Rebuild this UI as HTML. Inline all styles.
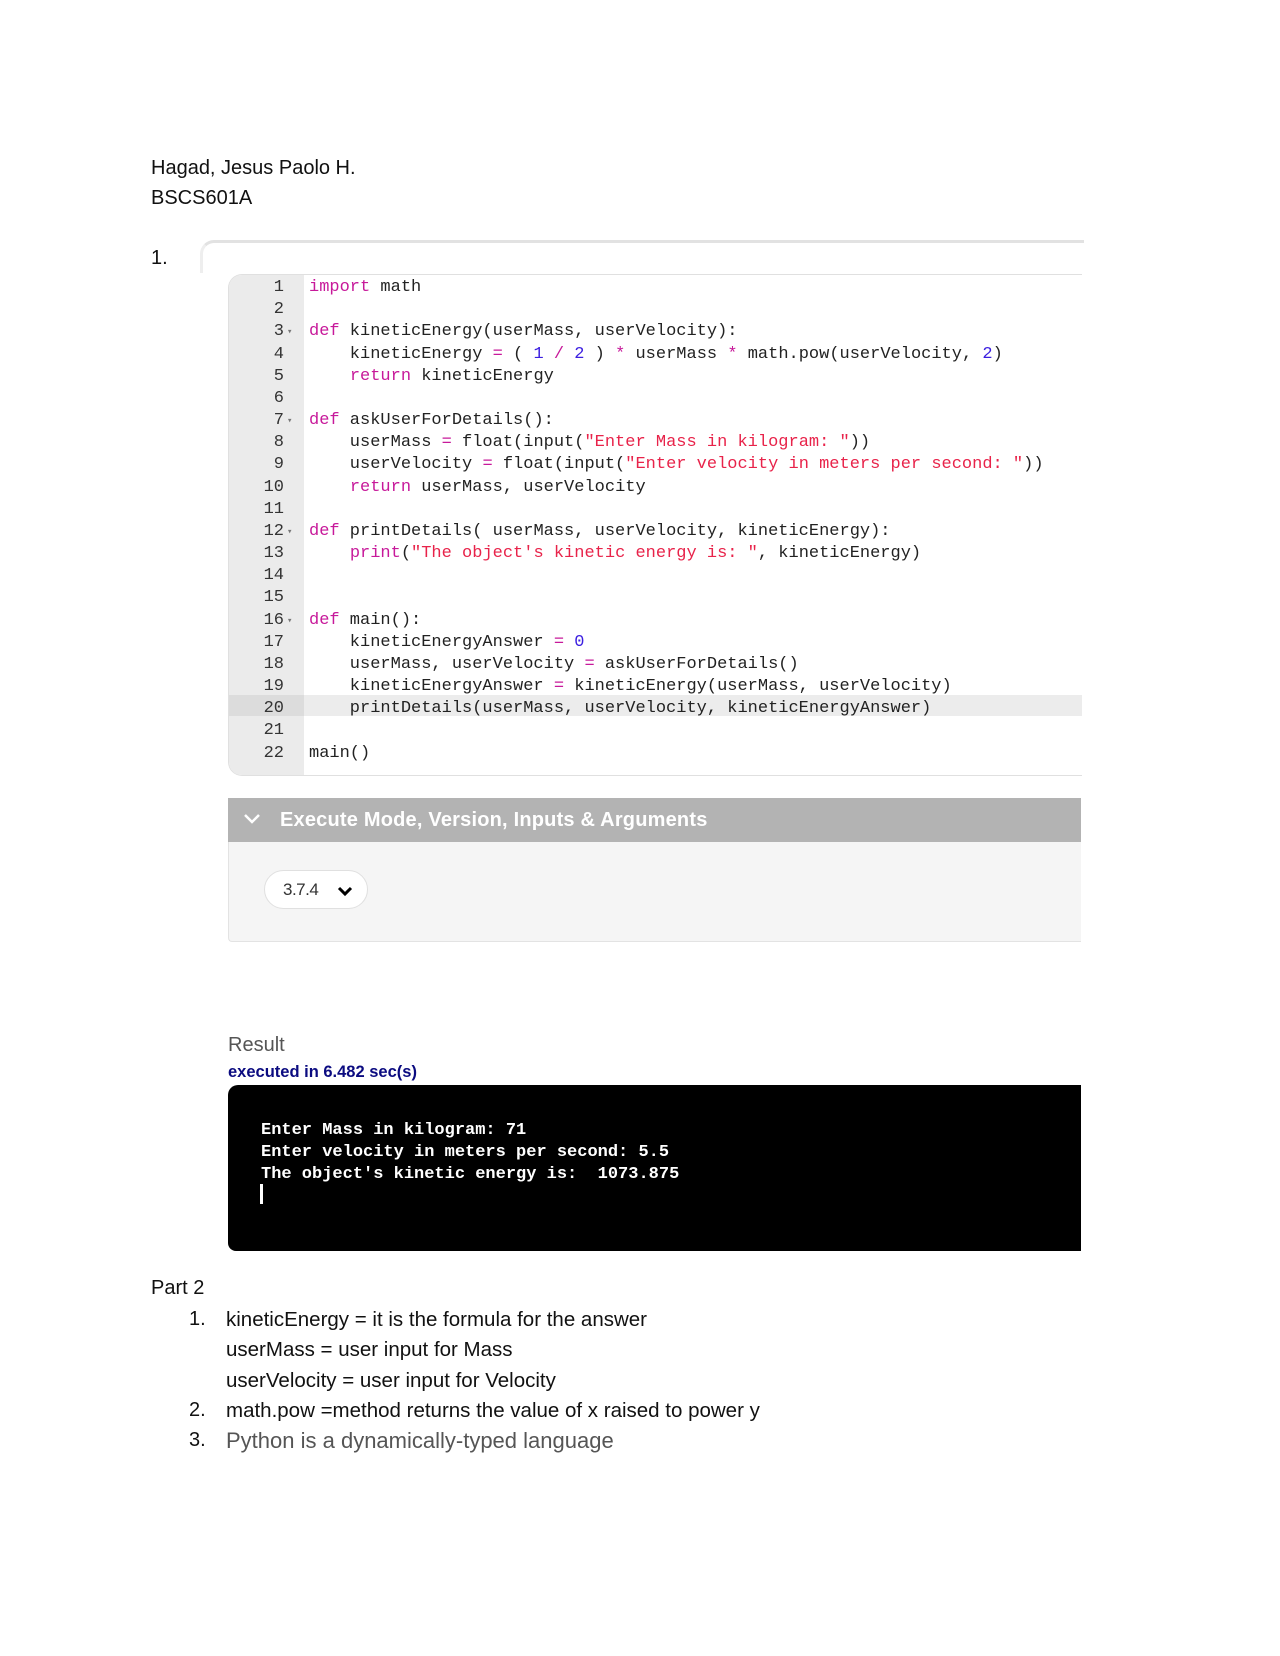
<!DOCTYPE html>
<html><head><meta charset="utf-8"><style>
body{margin:0;background:#fff;width:1280px;height:1656px;position:relative;overflow:hidden;font-family:"Liberation Sans",sans-serif;}
.a{position:absolute;white-space:pre;}
.doc{font-size:20px;color:#111;}
.code{position:absolute;left:228px;top:274px;width:853px;height:500px;border:1px solid #e0e0e0;border-right:none;border-radius:14px 0 0 14px;overflow:hidden;background:#fff;}
.gut{position:absolute;left:0;top:0;width:75px;height:100%;background:#ebebeb;}
.ln{position:absolute;white-space:pre;font-family:"Liberation Mono",monospace;font-size:17px;color:#333;line-height:22.17px;}
.k{color:#c7199a}.s{color:#e8234a}.n{color:#3b1ee0}.o{color:#c7199a}
.term{font-family:"Liberation Mono",monospace;font-weight:bold;font-size:17px;color:#fff;line-height:22px;}
</style></head><body>
<div class="a doc" style="left:151px;top:157px">Hagad, Jesus Paolo H.</div>
<div class="a doc" style="left:151px;top:187px">BSCS601A</div>
<div class="a doc" style="left:151px;top:247px">1.</div>
<div style="position:absolute;left:200px;top:240px;width:881px;height:30px;border-top:3px solid #e2e2e2;border-left:3px solid #eee;border-radius:14px 0 0 0;"></div>

<div class="code">
<div class="gut"></div>
<div style="position:absolute;left:0;top:420px;width:853px;height:21px;background:#ececec;"></div>
<div style="position:absolute;left:0;top:420px;width:75px;height:21px;background:#dcdcdc;"></div>
<div class="ln" style="left:0;top:2px;width:55px;text-align:right;">1
2
3
4
5
6
7
8
9
10
11
12
13
14
15
16
17
18
19
20
21
22</div>
<div class="ln" style="left:58px;top:2px;font-size:9px;color:#777;line-height:22.17px;">

▾



▾




▾



▾</div>
<div class="ln" style="left:80px;top:2px;color:#222;"><span class="k">import</span> math

<span class="k">def</span> kineticEnergy(userMass, userVelocity):
    kineticEnergy <span class="o">=</span> ( <span class="n">1</span> <span class="o">/</span> <span class="n">2</span> ) <span class="o">*</span> userMass <span class="o">*</span> math.pow(userVelocity, <span class="n">2</span>)
    <span class="k">return</span> kineticEnergy

<span class="k">def</span> askUserForDetails():
    userMass <span class="o">=</span> float(input(<span class="s">"Enter Mass in kilogram: "</span>))
    userVelocity <span class="o">=</span> float(input(<span class="s">"Enter velocity in meters per second: "</span>))
    <span class="k">return</span> userMass, userVelocity

<span class="k">def</span> printDetails( userMass, userVelocity, kineticEnergy):
    <span class="k">print</span>(<span class="s">"The object's kinetic energy is: "</span>, kineticEnergy)


<span class="k">def</span> main():
    kineticEnergyAnswer <span class="o">=</span> <span class="n">0</span>
    userMass, userVelocity <span class="o">=</span> askUserForDetails()
    kineticEnergyAnswer <span class="o">=</span> kineticEnergy(userMass, userVelocity)
    printDetails(userMass, userVelocity, kineticEnergyAnswer)

main()</div>
</div>

<div style="position:absolute;left:228px;top:798px;width:853px;height:44px;background:#b3b3b3;"></div>
<svg style="position:absolute;left:243px;top:812px" width="18" height="14"><path d="M2 3 L9 10 L16 3" stroke="#fff" stroke-width="2.5" fill="none"/></svg>
<div class="a" style="left:280px;top:809px;font-size:20px;color:#fff;font-weight:bold;letter-spacing:0.2px;">Execute Mode, Version, Inputs &amp; Arguments</div>
<div style="position:absolute;left:228px;top:842px;width:853px;height:100px;background:#f5f5f5;border:1px solid #e3e3e3;border-top:none;border-right:none;box-sizing:border-box;border-radius:0 0 0 4px;"></div>
<div style="position:absolute;left:264px;top:870px;width:104px;height:39px;background:#fff;border:1px solid #e0e0e0;border-radius:20px;box-sizing:border-box;"></div>
<div class="a" style="left:283px;top:880px;font-size:17px;color:#333;letter-spacing:-0.5px;">3.7.4</div>
<svg style="position:absolute;left:337px;top:885px" width="16" height="12"><path d="M2 3 L8 9 L14 3" stroke="#000" stroke-width="3" fill="none"/></svg>

<div class="a" style="left:228px;top:1034px;font-size:20px;color:#555;">Result</div>
<div class="a" style="left:228px;top:1063px;font-size:16.5px;color:#0b0b80;font-weight:bold;">executed in 6.482 sec(s)</div>
<div style="position:absolute;left:228px;top:1085px;width:853px;height:166px;background:#000;border-radius:10px 0 0 8px;"></div>
<div class="a term" style="left:261px;top:1120px;">Enter Mass in kilogram: 71
Enter velocity in meters per second: 5.5
The object's kinetic energy is:  1073.875</div>
<div style="position:absolute;left:260px;top:1184px;width:3px;height:20px;background:#fff;"></div>

<div class="a doc" style="left:151px;top:1277px">Part 2</div>
<div class="a doc" style="left:189px;top:1308px">1.</div>
<div class="a doc" style="left:226px;top:1308px;font-size:20.5px">kineticEnergy = it is the formula for the answer</div>
<div class="a doc" style="left:226px;top:1338px;font-size:20.5px">userMass = user input for Mass</div>
<div class="a doc" style="left:226px;top:1369px;font-size:20.5px">userVelocity = user input for Velocity</div>
<div class="a doc" style="left:189px;top:1399px">2.</div>
<div class="a doc" style="left:226px;top:1399px;font-size:20.5px">math.pow =method returns the value of x raised to power y</div>
<div class="a doc" style="left:189px;top:1429px">3.</div>
<div class="a doc" style="left:226px;top:1428px;font-size:22px;color:#555;">Python is a dynamically-typed language</div>
</body></html>
